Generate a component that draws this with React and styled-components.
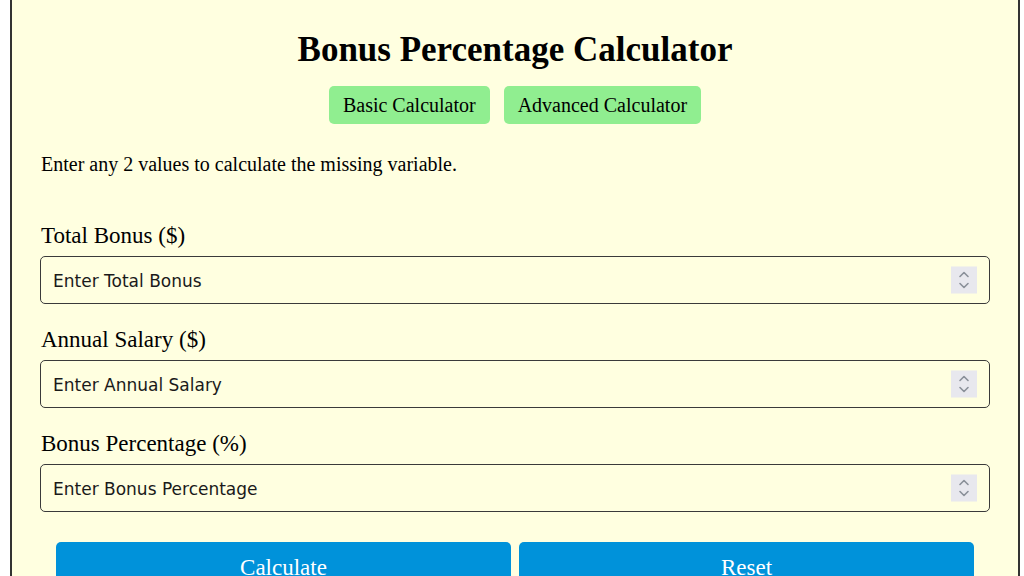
import React from "react";
import styled, { createGlobalStyle } from "styled-components";

const Global = createGlobalStyle`
  html, body { margin: 0; padding: 0; background: #ffffff; }
  body { font-family: "Liberation Serif", "Times New Roman", serif; color: #000; }
  * { box-sizing: border-box; }
`;

const Page = styled.div`
  margin-left: 10px;
  width: 1010px;
  min-height: 576px;
  background: #ffffe0;
  border-left: 2px solid #333;
  border-right: 2px solid #333;
  padding: 30px 28px 0;
`;

const Title = styled.h1`
  margin: 0;
  font-size: 35px;
  line-height: 40px;
  font-weight: bold;
  text-align: center;
`;

const Tabs = styled.div`
  display: flex;
  justify-content: center;
  gap: 14px;
  margin-top: 16px;
`;

const Tab = styled.button`
  height: 38px;
  padding: 0 14px;
  border: none;
  border-radius: 5px;
  background: #90ee90;
  font-family: "Liberation Serif", "Times New Roman", serif;
  font-size: 20px;
  color: #000;
  cursor: pointer;
`;

const Intro = styled.p`
  margin: 28px 0 0 1px;
  font-size: 20px;
  line-height: 24px;
`;

const Field = styled.div`
  margin-top: ${(p) => p.$gap}px;
`;

const Label = styled.label`
  display: block;
  margin-left: 1px;
  font-size: 23px;
  line-height: 28px;
  padding-top: 1px;
`;

const InputWrap = styled.div`
  position: relative;
  margin-top: 6px;
`;

const Input = styled.input`
  display: block;
  width: 100%;
  height: 48px;
  padding: 1px 12px 0;
  border: 1px solid #3a3a3a;
  border-radius: 5px;
  background: #ffffe0;
  font-family: "DejaVu Sans", Verdana, sans-serif;
  font-size: 17px;
  color: #000;
  outline: none;
  &::placeholder { color: #1a1a1a; opacity: 1; }
`;

const Spinner = styled.span`
  position: absolute;
  right: 13px;
  top: 50%;
  transform: translateY(-50%);
  width: 26px;
  height: 27px;
  background: #e8e8ee;
  display: flex;
  align-items: center;
  justify-content: center;
`;

const Actions = styled.div`
  display: flex;
  gap: 8px;
  margin-top: 30px;
  padding: 0 16px;
`;

const ActionButton = styled.button`
  flex: 1;
  height: 52px;
  border: none;
  border-radius: 5px;
  background: #0092da;
  color: #fff;
  font-family: "Liberation Serif", "Times New Roman", serif;
  font-size: 23px;
  cursor: pointer;
`;

const SpinIcon = () => (
  <svg width="14" height="21" viewBox="0 0 14 21" fill="none" stroke="#8a9099" strokeWidth="1.6" strokeLinecap="round" strokeLinejoin="round">
    <path d="M3 7 L7 3 L11 7" />
    <path d="M3 14 L7 18 L11 14" />
  </svg>
);

const fields = [
  { label: "Total Bonus ($)", placeholder: "Enter Total Bonus" },
  { label: "Annual Salary ($)", placeholder: "Enter Annual Salary" },
  { label: "Bonus Percentage (%)", placeholder: "Enter Bonus Percentage" },
];

export default function App() {
  return (
    <>
      <Global />
      <Page>
        <Title>Bonus Percentage Calculator</Title>
        <Tabs>
          <Tab>Basic Calculator</Tab>
          <Tab>Advanced Calculator</Tab>
        </Tabs>
        <Intro>Enter any 2 values to calculate the missing variable.</Intro>
        {fields.map((f, i) => (
          <Field key={f.label} $gap={i === 0 ? 45 : 21}>
            <Label>{f.label}</Label>
            <InputWrap>
              <Input type="text" placeholder={f.placeholder} />
              <Spinner><SpinIcon /></Spinner>
            </InputWrap>
          </Field>
        ))}
        <Actions>
          <ActionButton>Calculate</ActionButton>
          <ActionButton>Reset</ActionButton>
        </Actions>
      </Page>
    </>
  );
}
